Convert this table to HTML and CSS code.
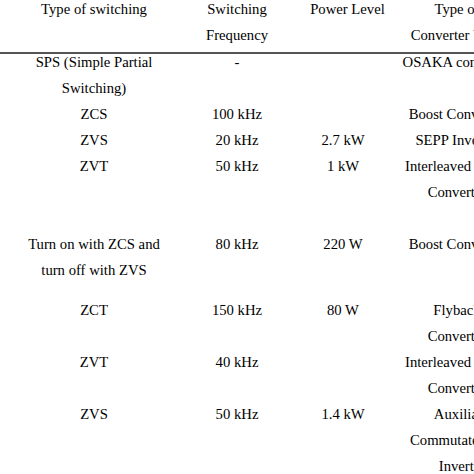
FILE: index.html
```html
<!DOCTYPE html>
<html>
<head>
<meta charset="utf-8">
<link rel="stylesheet" href="styles.css">
</head>
<body>
<div class="tbl">
  <div class="row head">
    <div class="cell">Type of switching</div>
    <div class="cell">Switching<br>Frequency</div>
    <div class="cell power-head">Power Level</div>
    <div class="cell">Type of<br>Converter Used</div>
  </div>
  <div class="row first">
    <div class="cell">SPS (Simple Partial<br>Switching)</div>
    <div class="cell">-</div>
    <div class="cell"></div>
    <div class="cell">OSAKA converter</div>
  </div>
  <div class="row">
    <div class="cell">ZCS</div>
    <div class="cell">100 kHz</div>
    <div class="cell"></div>
    <div class="cell">Boost Converter</div>
  </div>
  <div class="row">
    <div class="cell">ZVS</div>
    <div class="cell">20 kHz</div>
    <div class="cell">2.7 kW</div>
    <div class="cell">SEPP Inverter</div>
  </div>
  <div class="row gap-line">
    <div class="cell">ZVT</div>
    <div class="cell">50 kHz</div>
    <div class="cell">1 kW</div>
    <div class="cell">Interleaved Boost<br>Converter</div>
  </div>
  <div class="row gap-half">
    <div class="cell">Turn on with ZCS and<br>turn off with ZVS</div>
    <div class="cell">80 kHz</div>
    <div class="cell">220 W</div>
    <div class="cell">Boost Converter</div>
  </div>
  <div class="row">
    <div class="cell">ZCT</div>
    <div class="cell">150 kHz</div>
    <div class="cell">80 W</div>
    <div class="cell">Flyback<br>Converter</div>
  </div>
  <div class="row">
    <div class="cell">ZVT</div>
    <div class="cell">40 kHz</div>
    <div class="cell"></div>
    <div class="cell">Interleaved Boost<br>Converter</div>
  </div>
  <div class="row">
    <div class="cell">ZVS</div>
    <div class="cell">50 kHz</div>
    <div class="cell">1.4 kW</div>
    <div class="cell arcp">Auxiliary<br>Commutated Pole<br>Inverter</div>
  </div>
</div>
</body>
</html>
```
FILE: styles.css
```css
html, body {
  margin: 0;
  padding: 0;
  background: #ffffff;
  overflow: hidden;
}

.tbl {
  width: 514px;
  margin-top: -4px;
  font-family: "Liberation Serif", "Times New Roman", serif;
  font-size: 14.7px;
  line-height: 26.1px;
  color: #000000;
}

.row {
  display: grid;
  grid-template-columns: 188px 98px 114px 114px;
  align-items: start;
}

.cell {
  text-align: center;
  white-space: nowrap;
}

.head {
  padding-bottom: 4px;
  border-bottom: 2px solid #555555;
  margin-bottom: -5.5px;
}

.power-head {
  padding-left: 9px;
}

.arcp {
  padding-left: 10px;
}

.gap-line {
  padding-bottom: 26.1px;
}

.gap-half {
  padding-bottom: 13.4px;
}
```
